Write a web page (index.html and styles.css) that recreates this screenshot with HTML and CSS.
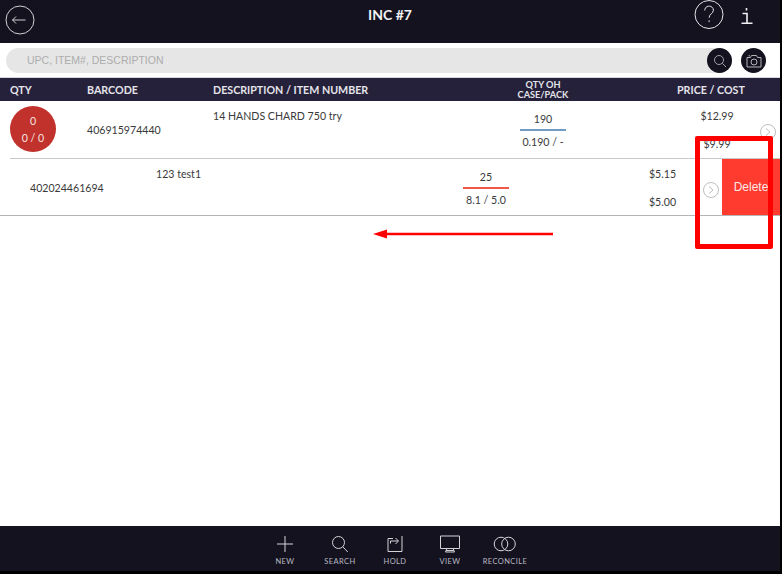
FILE: index.html
```html
<!DOCTYPE html>
<html lang="en">
<head>
<meta charset="utf-8">
<title>INC #7</title>
<link rel="stylesheet" href="styles.css">
</head>
<body>
<div class="app">
  <header class="topbar">
    <button class="icon-btn back" aria-label="Back">
      <svg width="30" height="30" viewBox="0 0 30 30" fill="none" stroke="#e4e4e8" stroke-width=".9"><circle cx="15" cy="15" r="14"/><path d="M7.500 15h13M11 11.500L7.500 15l3.500 3.500"/></svg>
    </button>
    <h1 class="title">INC #7</h1>
    <div class="top-actions">
      <svg width="30" height="30" viewBox="0 0 30 30" fill="none" stroke="#e4e4e8" stroke-width="1"><circle cx="15" cy="14.500" r="14"/><path d="M10.800 10.500c0-6 8.600-5.500 8.600-.3 0 3.400-4.300 3.700-4.300 7.500"/><path d="M15.100 20.300v1.800"/></svg>
      <svg class="info" width="12" height="16" viewBox="0 0 12 16" fill="none" stroke="#f0f0f2" stroke-width="1.600"><path d="M5.500 0v2.500"/><path d="M1.500 5.500h4.500v9.500M.500 15.200h11"/></svg>
    </div>
  </header>

  <div class="searchbar">
    <div class="search-field">
      <span class="placeholder">UPC, ITEM#, DESCRIPTION</span>
      <span class="round-btn">
        <svg width="14" height="14" viewBox="0 0 14 14" fill="none" stroke="#9f9fa8" stroke-width="1"><circle cx="6" cy="6" r="4.500"/><path d="M9.300 9.300l3.700 3.700"/></svg>
      </span>
    </div>
    <span class="round-btn">
      <svg width="16" height="14" viewBox="0 0 16 14" fill="none" stroke="#b4b4ba" stroke-width="1"><path d="M1 3.500h3.500l1-2h5l1 2H15v9.500H1z"/><circle cx="8" cy="8" r="3"/><path d="M2.500 1.800h1.500"/></svg>
    </span>
  </div>

  <div class="grid table-head">
    <span>QTY</span>
    <span>BARCODE</span>
    <span>DESCRIPTION / ITEM NUMBER</span>
    <span class="head-oh">QTY OH<br>CASE/PACK</span>
    <span class="spacer"></span>
    <span>PRICE / COST</span>
  </div>

  <div class="row first">
    <div class="grid row-content">
      <div class="qty-cell">
        <div class="badge"><span>0</span><span>0 / 0</span></div>
      </div>
      <div class="barcode">406915974440</div>
      <div class="desc">14 HANDS CHARD 750 try</div>
      <div class="oh">
        <span class="oh-top">190</span>
        <span class="oh-line blue"></span>
        <span class="oh-bottom">0.190 / -</span>
      </div>
      <span class="spacer"></span>
      <div class="price"><span>$12.99</span><span>$9.99</span></div>
      <div class="chev-cell">
        <svg width="16" height="16" viewBox="0 0 16 16" fill="none" stroke="#bdbdbd" stroke-width="1"><circle cx="8" cy="8" r="7.500"/><path d="M6 4.500l4 3.500-4 3.500"/></svg>
      </div>
    </div>
  </div>

  <div class="row swiped">
    <div class="grid row-content shifted">
      <div class="qty-cell"></div>
      <div class="barcode">402024461694</div>
      <div class="desc">123 test1</div>
      <div class="oh">
        <span class="oh-top">25</span>
        <span class="oh-line red"></span>
        <span class="oh-bottom">8.1 / 5.0</span>
      </div>
      <span class="spacer"></span>
      <div class="price price-shifted"><span>$5.15</span><span>$5.00</span></div>
      <div class="chev-cell">
        <svg width="16" height="16" viewBox="0 0 16 16" fill="none" stroke="#bdbdbd" stroke-width="1"><circle cx="8" cy="8" r="7.500"/><path d="M6 4.500l4 3.500-4 3.500"/></svg>
      </div>
    </div>
    <div class="delete">Delete</div>
  </div>

  <div class="empty"></div>

  <nav class="bottombar">
    <a class="tab">
      <svg width="18" height="18" viewBox="0 0 18 18" fill="none" stroke="#d4d4d8" stroke-width="1"><path d="M9 1v16M1 9h16"/></svg>
      <span>NEW</span>
    </a>
    <a class="tab">
      <svg width="18" height="18" viewBox="0 0 18 18" fill="none" stroke="#d4d4d8" stroke-width="1"><circle cx="7.500" cy="7.500" r="6"/><path d="M11.800 11.800l5 5.200"/></svg>
      <span>SEARCH</span>
    </a>
    <a class="tab">
      <svg width="18" height="18" viewBox="0 0 18 18" fill="none" stroke="#d4d4d8" stroke-width="1"><path d="M7 3.500H2v13h14V1"/><path d="M4.500 8.500V6h7.500M9.500 3l3 3-3 3"/></svg>
      <span>HOLD</span>
    </a>
    <a class="tab">
      <svg width="20" height="18" viewBox="0 0 20 18" fill="none" stroke="#d4d4d8" stroke-width="1"><path d="M.500 1h19v12.500H.500z"/><path d="M7 13.500L5.500 17h9L13 13.500M6 15.500h8"/></svg>
      <span>VIEW</span>
    </a>
    <a class="tab">
      <svg width="24" height="18" viewBox="0 0 24 18" fill="none" stroke="#d4d4d8" stroke-width="1"><circle cx="8" cy="9" r="6.800"/><circle cx="15.500" cy="9" r="6.800"/></svg>
      <span>RECONCILE</span>
    </a>
  </nav>
</div>

<div class="mark-box"></div>
<svg class="mark-arrow" width="180" height="10" viewBox="0 0 180 10"><path d="M0 5L14 .500v3.200h166v2.600H14v3.200z" fill="#f00"/></svg>
</body>
</html>
```

FILE: styles.css
```css
* { box-sizing: border-box; }
html, body { margin: 0; padding: 0; }
body {
  width: 782px;
  height: 574px;
  background: #000;
  overflow: hidden;
  position: relative;
  font-family: "Lato", "Liberation Sans", sans-serif;
  color: #333;
}
.app {
  width: 780px;
  height: 571px;
  background: #fff;
  display: flex;
  flex-direction: column;
}
.topbar {
  height: 43px;
  flex: none;
  background: #14121f;
  display: flex;
  align-items: flex-start;
  justify-content: space-between;
  padding: 5px 0 0 5px;
  position: relative;
}
.icon-btn { background: none; border: 0; padding: 0; width: 30px; height: 30px; display: block; }
.title {
  margin: 0;
  position: absolute;
  left: 0;
  right: 0;
  top: 6px;
  text-align: center;
  color: #f2f2f4;
  font-size: 14px;
  line-height: 17px;
  font-weight: 700;
}
.top-actions {
  display: flex;
  align-items: flex-start;
  gap: 17px;
  margin-top: -5px;
  padding-right: 27px;
}
.info { margin-top: 8px; }
.searchbar {
  height: 35px;
  flex: none;
  display: flex;
  align-items: center;
  gap: 9px;
  padding: 1px 14px 0 6px;
  border-bottom: 1px solid #d6d6da;
}
.search-field {
  width: 726px;
  height: 25px;
  border-radius: 13px;
  background: #e6e6e6;
  display: flex;
  align-items: center;
  justify-content: space-between;
  padding-left: 21px;
}
.placeholder {
  font-family: "Liberation Sans", Arial, sans-serif;
  font-size: 10.500px;
  line-height: 12px;
  margin-top: -1px;
  color: #adadad;
}
.round-btn {
  width: 25px;
  height: 25px;
  border-radius: 50%;
  background: #14121f;
  display: flex;
  align-items: center;
  justify-content: center;
  flex: none;
}
.grid {
  display: grid;
  grid-template-columns: 77px 126px 284px 92px 88px 80px 20px;
}
.table-head {
  height: 23px;
  flex: none;
  background: #26213a;
  color: #e4e4ea;
  font-size: 10.700px;
  font-weight: 700;
  line-height: 24px;
  padding-left: 10px;
  grid-template-columns: 77px 126px 284px 92px 88px auto;
}
.head-oh {
  font-size: 9.200px;
  line-height: 10px;
  text-align: center;
  padding-top: 2px;
  white-space: nowrap;
}
.row { flex: none; overflow: hidden; }
.first {
  height: 58px;
  margin-left: 10px;
  border-bottom: 1px solid #c9c9c9;
}
.swiped {
  height: 57px;
  border-bottom: 1px solid #b5b5b5;
  display: flex;
}
.row-content {
  font-size: 10.600px;
  line-height: 14px;
  color: #3a3a3a;
  height: 100%;
}
.shifted {
  flex: none;
  width: 769px;
  margin-left: -47px;
}
.qty-cell { display: flex; align-items: center; }
.badge {
  width: 46px;
  height: 46px;
  border-radius: 50%;
  background: #c0322b;
  color: #f6e4e2;
  display: flex;
  flex-direction: column;
  align-items: center;
  gap: 3px;
  padding-top: 8px;
  margin-top: -1px;
}
.barcode { padding-top: 22px; }
.desc { padding-top: 7.500px; }
.oh {
  display: flex;
  flex-direction: column;
  align-items: center;
  padding-top: 11px;
}
.oh-top { height: 14px; }
.oh-line { width: 46px; height: 2px; margin: 3px 0 4px; }
.oh-line.blue { background: #6f9cc4; }
.oh-line.red { background: #f0584a; }
.price {
  display: flex;
  flex-direction: column;
  align-items: center;
  gap: 14px;
  padding-top: 8px;
  width: 80px;
}
.price-shifted { padding-left: 5px; }
.chev-cell { padding: 23px 0 0 3px; }
.delete {
  flex: none;
  width: 58px;
  background: #ff3b30;
  color: #fbe9e7;
  font-family: "Liberation Sans", Arial, sans-serif;
  font-size: 12px;
  display: flex;
  align-items: center;
  justify-content: center;
}
.empty { flex: 1; }
.bottombar {
  height: 45px;
  flex: none;
  background: #14121f;
  display: flex;
  justify-content: center;
  padding: 9px 0 0 10px;
}
.tab {
  width: 55px;
  display: flex;
  flex-direction: column;
  align-items: center;
  gap: 5px;
  color: #b9b9c2;
  font-size: 7.500px;
  line-height: 8px;
  letter-spacing: .4px;
  font-weight: 400;
}
.mark-box {
  position: absolute;
  left: 695px;
  top: 136px;
  width: 78px;
  height: 113px;
  border: 5px solid #f00;
  border-radius: 2px;
}
.mark-arrow {
  position: absolute;
  left: 373px;
  top: 229px;
}
```
